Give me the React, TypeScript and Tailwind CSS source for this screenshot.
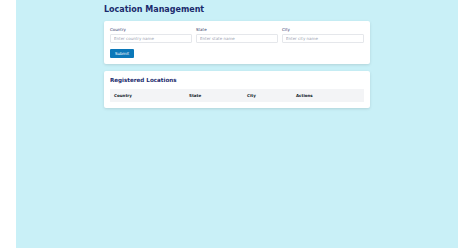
export default function App() {
  const fields = [
    { label: "Country", placeholder: "Enter country name" },
    { label: "State", placeholder: "Enter state name" },
    { label: "City", placeholder: "Enter city name" },
  ];

  return (
    <div className="h-[248px] w-full bg-white px-4 font-['DejaVu_Sans',sans-serif]">
      <div className="h-full bg-[#c9f0f7] pt-[5px]">
        <div className="mx-auto w-[266px]">
          <h1 className="mb-[6px] text-[8px] leading-[10px] font-bold text-[#1a2a6c]">
            Location Management
          </h1>

          {/* form card */}
          <div className="rounded-[2px] bg-white p-[6px] shadow-[0_1px_3px_rgba(0,0,0,0.12)]">
            <div className="grid grid-cols-3 gap-[4px]">
              {fields.map((f) => (
                <div key={f.label} className="flex flex-col">
                  <label className="mb-[2px] text-[4px] leading-[5px] text-[#2a3366]">{f.label}</label>
                  <input
                    className="h-[9px] rounded-[1px] border border-gray-200 px-[3px] text-[4px] outline-none placeholder:text-gray-400"
                    placeholder={f.placeholder}
                  />
                </div>
              ))}
            </div>
            <button className="mt-[6px] block h-[9px] w-[24px] rounded-[1px] bg-[#0b78b9] text-[4px] leading-[9px] text-white">
              Submit
            </button>
          </div>

          {/* list card */}
          <div className="mt-[7px] rounded-[2px] bg-white px-[6px] pt-[5px] pb-[6px] shadow-[0_1px_3px_rgba(0,0,0,0.12)]">
            <h2 className="mb-[4px] text-[5.6px] leading-[9px] font-bold text-[#1a2a6c]">Registered Locations</h2>
            <table className="w-full table-fixed border-collapse">
              <thead>
                <tr className="h-[13px] bg-gray-100 text-left text-[4px] font-bold text-gray-900">
                  <th className="w-[79px] pl-[4px]">Country</th>
                  <th className="w-[58px]">State</th>
                  <th className="w-[49px]">City</th>
                  <th>Actions</th>
                </tr>
              </thead>
              <tbody />
            </table>
          </div>
        </div>
      </div>
    </div>
  );
}
